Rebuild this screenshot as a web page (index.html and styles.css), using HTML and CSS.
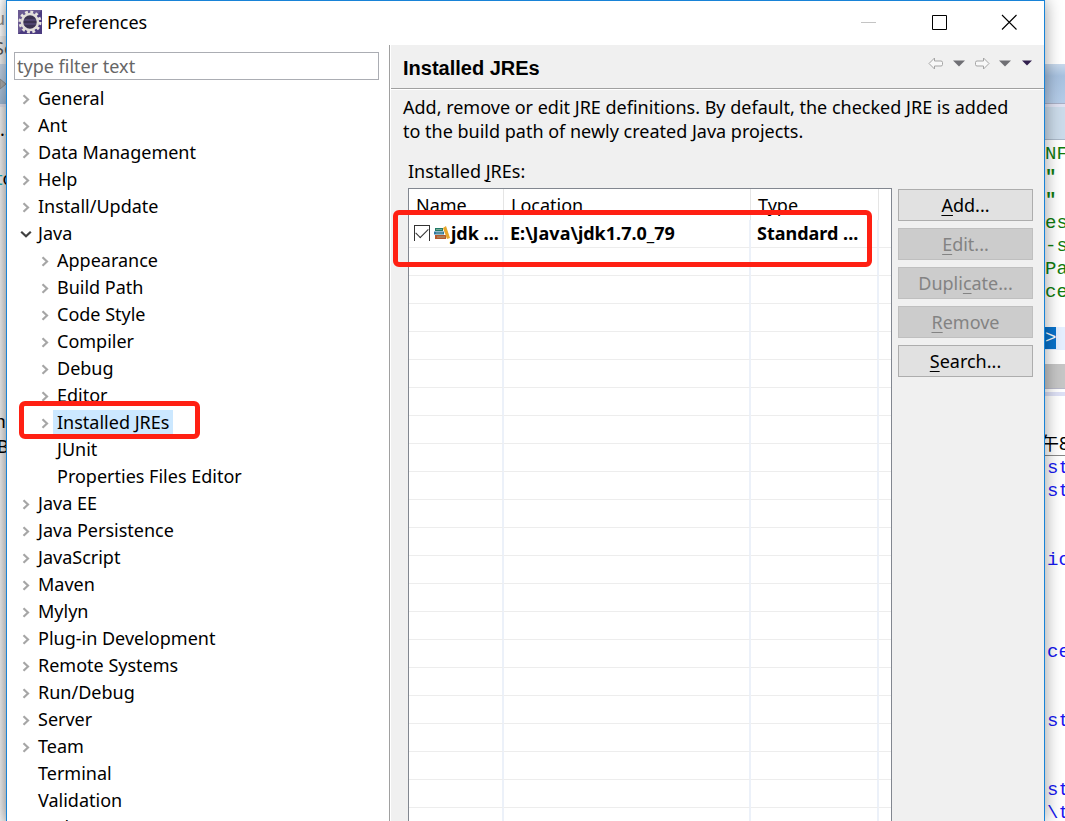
FILE: index.html
```html
<!DOCTYPE html>
<html lang="en">
<head>
<meta charset="utf-8">
<title>Preferences</title>
<link rel="stylesheet" href="styles.css">
</head>
<body>
<svg class="symbols" aria-hidden="true">
  <symbol id="closed" viewBox="0 0 8 11"><path d="M1.5 1.2 6 5.5 1.5 9.8" fill="none" stroke="#a6a6a6" stroke-width="2.200"/></symbol>
  <symbol id="open" viewBox="0 0 12 9"><path d="M1.2 1.7 6 6.3 10.8 1.7" fill="none" stroke="#404040" stroke-width="2.200"/></symbol>
  <symbol id="arrow" viewBox="0 0 16 13"><path d="M1 6.5 6.5 1v3H13q1.5 0 1.500 1.500v2q0 1.500-1.500 1.500H6.500v3Z" fill="#f8f8f8" stroke="#a5a5a5"/></symbol>
  <symbol id="down" viewBox="0 0 12 7"><path d="M0 .5h12L6 6.500Z" fill="currentColor"/></symbol>
</svg>
<div class="desktop">
  <div class="behind-left" aria-hidden="true">
    <div class="tabs">ui</div>
    <div class="menu">Se</div>
    <div class="bar"><svg width="6" height="14" viewBox="0 0 6 14"><path d="M0 2 6 7 0 12Z" fill="#aaa" stroke="#8b8b8b"/></svg></div>
    <div class="item">..</div>
    <div class="item tail"><span class="cyan">t</span>o</div>
    <div class="item name">m</div>
    <div class="item last">B</div>
  </div>

  <main class="dialog">
    <header class="titlebar">
      <svg class="app" width="24" height="24" viewBox="0 0 24 24">
        <rect width="24" height="24" fill="#4b3b80"/><path d="M0 0h24L0 24Z" fill="#6a5a92"/>
        <circle cx="12" cy="12" r="10" fill="none" stroke="#e6e2de" stroke-width="3" stroke-dasharray="2.800 2.436"/>
        <circle cx="12" cy="12" r="8" fill="#3a3150" stroke="#e2deda" stroke-width="2.500"/>
        <path d="M6 10h12M6 14h12" stroke="#62578a"/>
      </svg>
      <h1>Preferences</h1>
      <button class="win" aria-label="Minimize"><svg width="16" height="16" viewBox="0 0 16 16"><path d="M0 8.500h15" stroke="#c4c4c4"/></svg></button>
      <button class="win" aria-label="Maximize"><svg width="16" height="16" viewBox="0 0 16 16"><path d="M1.500 1.500h14v14h-14Z" fill="none" stroke="#000"/></svg></button>
      <button class="win" aria-label="Close"><svg width="16" height="16" viewBox="0 0 16 16"><path d="M1 1l14.500 14.500M15.500 1L1 15.500" stroke="#000" stroke-width="1.100"/></svg></button>
    </header>
    <div class="content">
      <nav class="side">
        <input class="filter" type="text" placeholder="type filter text" aria-label="type filter text">
        <ul class="tree">
          <li><svg><use href="#closed"/></svg><span>General</span></li>
          <li><svg><use href="#closed"/></svg><span>Ant</span></li>
          <li><svg><use href="#closed"/></svg><span>Data Management</span></li>
          <li><svg><use href="#closed"/></svg><span>Help</span></li>
          <li><svg><use href="#closed"/></svg><span>Install/Update</span></li>
          <li><svg><use href="#open"/></svg><span>Java</span></li>
          <li class="sub"><svg><use href="#closed"/></svg><span>Appearance</span></li>
          <li class="sub"><svg><use href="#closed"/></svg><span>Build Path</span></li>
          <li class="sub"><svg><use href="#closed"/></svg><span>Code Style</span></li>
          <li class="sub"><svg><use href="#closed"/></svg><span>Compiler</span></li>
          <li class="sub"><svg><use href="#closed"/></svg><span>Debug</span></li>
          <li class="sub"><svg><use href="#closed"/></svg><span>Editor</span></li>
          <li class="sub selected"><svg><use href="#closed"/></svg><span>Installed JREs</span><i class="mark"></i></li>
          <li class="sub"><svg></svg><span>JUnit</span></li>
          <li class="sub"><svg></svg><span>Properties Files Editor</span></li>
          <li><svg><use href="#closed"/></svg><span>Java EE</span></li>
          <li><svg><use href="#closed"/></svg><span>Java Persistence</span></li>
          <li><svg><use href="#closed"/></svg><span>JavaScript</span></li>
          <li><svg><use href="#closed"/></svg><span>Maven</span></li>
          <li><svg><use href="#closed"/></svg><span>Mylyn</span></li>
          <li><svg><use href="#closed"/></svg><span>Plug-in Development</span></li>
          <li><svg><use href="#closed"/></svg><span>Remote Systems</span></li>
          <li><svg><use href="#closed"/></svg><span>Run/Debug</span></li>
          <li><svg><use href="#closed"/></svg><span>Server</span></li>
          <li><svg><use href="#closed"/></svg><span>Team</span></li>
          <li><svg></svg><span>Terminal</span></li>
          <li><svg></svg><span>Validation</span></li>
          <li><svg></svg><span>Web</span></li>
        </ul>
      </nav>
      <section class="page">
        <div class="page-head">
          <h2>Installed JREs</h2>
          <div class="history">
            <button aria-label="Back"><svg width="16" height="13"><use href="#arrow"/></svg></button>
            <button aria-label="Back history"><svg width="12" height="7"><use href="#down"/></svg></button>
            <button aria-label="Forward"><svg class="flip" width="16" height="13"><use href="#arrow"/></svg></button>
            <button aria-label="Forward history"><svg width="12" height="7"><use href="#down"/></svg></button>
            <button class="dark" aria-label="Menu"><svg width="10" height="6"><use href="#down"/></svg></button>
          </div>
        </div>
        <p class="about">Add, remove or edit JRE definitions. By default, the checked JRE is added to the build path of newly created Java projects.</p>
        <p class="label" id="jres">Installed <u>J</u>REs:</p>
        <div class="work">
          <div class="list">
            <table aria-labelledby="jres">
              <colgroup><col class="c-name"><col class="c-loc"><col class="c-type"><col></colgroup>
              <thead><tr><th>Name</th><th>Location</th><th>Type</th><th></th></tr></thead>
              <tbody>
                <tr>
                  <td><label class="jre"><input type="checkbox" checked>
                    <svg width="16" height="14" viewBox="0 0 16 14"><path d="M1 2h8v3H1Z" fill="#217a68"/><path d="M0 5.500h10v3H0Z" fill="#2e76a0"/><path d="M1 9h11v4H1Z" fill="#b5582c"/><path d="M2 3.500h6M2 7h7M3 11h8" stroke="#9cc0a8" stroke-width=".7"/><path d="M9 2l3-2 4 12-3 1Z" fill="#e7a52a"/></svg>jdk ...</label></td>
                  <td>E:\Java\jdk1.7.0_79</td><td>Standard ...</td><td></td>
                </tr>
                <tr><td></td><td></td><td></td><td></td></tr><tr><td></td><td></td><td></td><td></td></tr>
                <tr><td></td><td></td><td></td><td></td></tr><tr><td></td><td></td><td></td><td></td></tr>
                <tr><td></td><td></td><td></td><td></td></tr><tr><td></td><td></td><td></td><td></td></tr>
                <tr><td></td><td></td><td></td><td></td></tr><tr><td></td><td></td><td></td><td></td></tr>
                <tr><td></td><td></td><td></td><td></td></tr><tr><td></td><td></td><td></td><td></td></tr>
                <tr><td></td><td></td><td></td><td></td></tr><tr><td></td><td></td><td></td><td></td></tr>
                <tr><td></td><td></td><td></td><td></td></tr><tr><td></td><td></td><td></td><td></td></tr>
                <tr><td></td><td></td><td></td><td></td></tr><tr><td></td><td></td><td></td><td></td></tr>
                <tr><td></td><td></td><td></td><td></td></tr><tr><td></td><td></td><td></td><td></td></tr>
                <tr><td></td><td></td><td></td><td></td></tr><tr><td></td><td></td><td></td><td></td></tr>
                <tr><td></td><td></td><td></td><td></td></tr>
              </tbody>
            </table>
            <i class="mark"></i>
          </div>
          <div class="actions">
            <button><u>A</u>dd...</button>
            <button disabled><u>E</u>dit...</button>
            <button disabled>Dupli<u>c</u>ate...</button>
            <button disabled><u>R</u>emove</button>
            <button><u>S</u>earch...</button>
          </div>
        </div>
      </section>
    </div>
  </main>

  <div class="behind-right" aria-hidden="true">
    <div class="space"></div>
    <div class="blue"></div>
    <div class="tab"></div>
    <pre class="code">NF
<b>"</b>
<b>"</b>
es
-s
Pa
ce

<span class="hit"><em>&gt;</em></span></pre>
    <div class="scroll"></div>
    <div class="sash"></div>
    <div class="console-title">午8</div>
    <pre class="code console">st
st


ic



ce


st


st
\t</pre>
  </div>
</div>
</body>
</html>
```
FILE: styles.css
```css
* { box-sizing: border-box; }
body { margin: 0; font: 18px/24px "Noto Sans", "Open Sans", sans-serif; color: #000; }
h1, h2, p, ul, pre { margin: 0; padding: 0; font-weight: 400; }
button { font: inherit; padding: 0; color: inherit; }
u { text-underline-offset: 3px; text-decoration-thickness: 1px; text-decoration-skip-ink: none; }
.symbols { display: none; }
.desktop { display: flex; height: 100vh; overflow: hidden; background: #fff; }

.behind-left { width: 6px; flex: none; overflow: hidden; background: linear-gradient(90deg, #f0f0f0, #e0e0e0); white-space: nowrap; }
.tabs { height: 36px; padding-top: 6px; color: #8a8a8a; text-indent: -6px; background: linear-gradient(90deg, #fff, #eee); }
.menu { height: 28px; color: #555; text-indent: -6px; }
.bar { height: 43px; display: flex; align-items: center; background: linear-gradient(#c3d2e4, #9db8d4); border-bottom: 3px solid #dcdce8; }
.item { height: 25px; margin-top: 10px; }
.item.tail { height: 256px; margin-top: 24px; margin-bottom: -23px; text-indent: -4px; }
.cyan { color: #19a8b4; }
.item.name { text-indent: -11px; }
.item.last { margin-top: 0; text-indent: -3px; }

.dialog { flex: 1; min-width: 0; display: flex; flex-direction: column; background: #fff; border: solid #1883d7; border-width: 1px 1px 0; box-shadow: 0 0 16px #0006; position: relative; z-index: 1; }
.titlebar { height: 44px; flex: none; display: flex; align-items: center; padding: 0 0 2px 11px; }
.titlebar h1 { flex: 1; margin-left: 5px; font-size: 18px; }
.win { width: 70px; height: 42px; border: 0; background: none; display: grid; place-items: center; }
.content { flex: 1; min-height: 0; display: flex; }

.side { width: 383px; flex: none; border-right: 1px solid #a0a0a0; padding: 7px 10px 0 7px; }
.filter { display: block; width: 100%; height: 28px; border: 1px solid #abadb3; padding: 0 2px; font: inherit; }
.filter::placeholder { color: #666; opacity: 1; }
.tree { list-style: none; padding-top: 4px; }
.tree li { display: flex; align-items: center; height: 27px; padding-left: 6px; position: relative; }
.tree li.sub { padding-left: 25px; }
.tree svg { width: 12px; height: 11px; margin-top: 3px; flex: none; }
.tree span { margin-left: 2px; padding: 0 4px; white-space: nowrap; }
.selected span { background: #cce8ff; }
.mark { position: absolute; border: 5px solid #ff2013; border-radius: 6px; z-index: 2; pointer-events: none; }
.tree .mark { left: 5px; width: 181px; top: -7px; height: 38px; }

.page { flex: 1; min-width: 0; margin-left: 1px; background: #f0f0f0; display: flex; flex-direction: column; }
.page-head { height: 44px; flex: none; display: flex; justify-content: space-between; align-items: center; padding: 2px 12px 0; border-bottom: 1px solid #a0a0a0; box-shadow: 0 1px #fff; }
.page-head h2 { font: bold 20px/24px "Liberation Sans", Arial, sans-serif; }
.history { display: flex; align-items: center; gap: 9px; color: #6f6f74; margin-bottom: 9px; }
.history button { display: flex; border: 0; background: none; }
.history .dark { color: #32204e; margin-left: 2px; }
.flip { transform: scaleX(-1); }
.about { padding: 6px 17px 0 12px; }
.label { padding: 16px 17px 0; }
.work { flex: 1; min-height: 0; display: flex; gap: 6px; padding: 5px 11px 0 17px; }
.list { flex: 1; min-width: 0; position: relative; border: 1px solid #828790; border-bottom: 0; background: #fff; }
.list .mark { left: -16px; right: 19px; top: 21px; height: 57px; }
table { width: 100%; table-layout: fixed; border-collapse: separate; border-spacing: 0; }
.c-name { width: 95px; }
.c-loc { width: 247px; }
.c-type { width: 128px; }
th { height: 31px; padding: 0 0 0 7px; font-weight: 400; text-align: left; border-right: 1px solid #e5e5e5; line-height: 28px; }
td { height: 28px; padding: 0 0 2px 6px; font-weight: 700; white-space: nowrap; border-right: 2px solid #ecf1f9; border-bottom: 1px solid #ededed; }
th:last-child, td:last-child { border-right: 0; }
.jre { display: flex; align-items: center; margin-left: -1px; }
.jre svg { margin: 0 1px 0 4px; flex: none; }
.jre input { appearance: none; flex: none; width: 16px; height: 16px; margin: 0; border: solid #333; border-width: 1px 1px 0; background: #fff; display: grid; place-items: center; }
.jre input:checked::before { content: ""; width: 11px; height: 6px; border: solid #333; border-width: 0 0 1px 1px; transform: rotate(-45deg); margin-top: -3px; }
.actions { width: 135px; flex: none; display: flex; flex-direction: column; gap: 7px; padding-top: 1px; }
.actions button { height: 32px; border: 1px solid #adadad; background: #e1e1e1; }
.actions button:disabled { color: #838383; background: #ccc; border-color: #bfbfbf; }

.behind-right { width: 20px; flex: none; overflow: hidden; background: #fff; }
.space { height: 64px; }
.blue { height: 40px; background: linear-gradient(#c8d9ec, #a7c1df 12px, #b5cce8); border-bottom: 1px solid #a9b0c6; }
.tab { height: 36px; border-top: 3px solid #e0e2f2; background: #cbdbea; border-bottom: 1px solid #aab8c8; }
.code { font: 19px/23px "Liberation Mono", monospace; color: #107c10; margin-top: 3px; }
.hit { display: block; background: #e5efff; }
.hit em { font-style: normal; color: #fff; background: #0872cc; }
.scroll { height: 24px; margin-top: 14px; background: #c6c6c6; }
.sash { height: 8px; margin-bottom: 36px; border-top: 1px solid #b8b8c8; border-bottom: 4px solid #dde0f5; }
.console-title { font: 18px/23px "Noto Sans", "Noto Sans CJK SC", sans-serif; border-bottom: 1px solid #888; white-space: nowrap; margin-left: -4px; }
.console { color: #1818f0; margin-top: 1px; padding-left: 2px; }
```
